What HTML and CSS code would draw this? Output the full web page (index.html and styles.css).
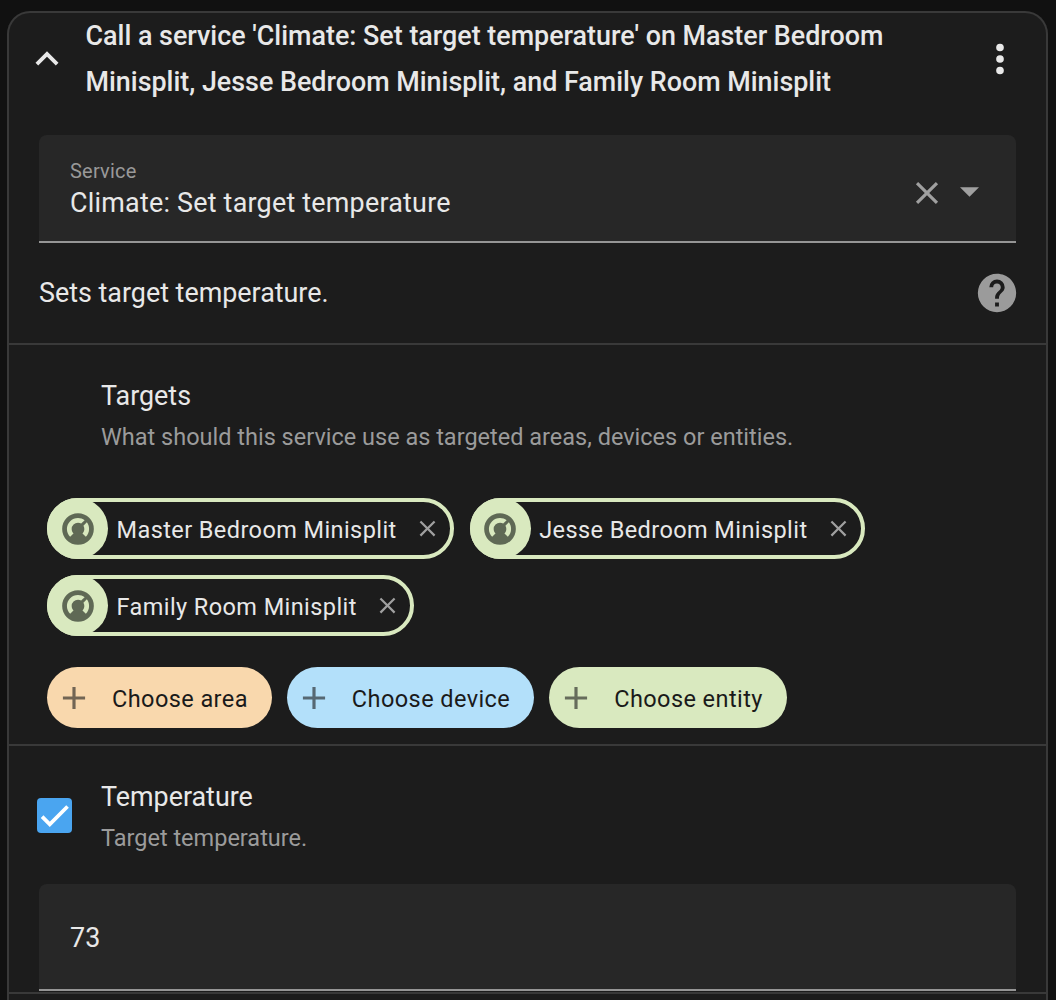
FILE: index.html
```html
<!DOCTYPE html>
<html lang="en">
<head>
    <meta charset="UTF-8">
    <meta name="viewport" content="width=device-width, initial-scale=1.0">
    <title>Edit Action</title>
    <link rel="stylesheet" href="styles.css">
</head>
<body>
    <svg class="defs" width="0" height="0">
        <symbol id="thermostat" viewBox="0 0 24 24"><path d="M16.95,16.95L14.83,14.83C15.55,14.1 16,13.1 16,12C16,11.26 15.79,10.57 15.43,10L17.6,7.81C18.5,9 19,10.43 19,12C19,13.93 18.22,15.68 16.95,16.95M12,5C13.57,5 15,5.5 16.19,6.4L14,8.56C13.43,8.21 12.74,8 12,8A4,4 0 0,0 8,12C8,13.1 8.45,14.1 9.17,14.83L7.05,16.95C5.78,15.68 5,13.93 5,12A7,7 0 0,1 12,5M12,2A10,10 0 0,0 2,12A10,10 0 0,0 12,22A10,10 0 0,0 22,12A10,10 0 0,0 12,2Z"/></symbol>
        <symbol id="close" viewBox="0 0 24 24"><path d="M19,6.41L17.59,5L12,10.59L6.41,5L5,6.41L10.59,12L5,17.59L6.41,19L12,13.41L17.59,19L19,17.59L13.41,12L19,6.41Z"/></symbol>
        <symbol id="plus" viewBox="0 0 24 24"><path d="M19,13H13V19H11V13H5V11H11V5H13V11H19V13Z"/></symbol>
    </svg>
    <div class="card">
        <div class="header">
            <svg class="icon" viewBox="0 0 24 24"><path d="M7.41,15.41L12,10.83L16.59,15.41L18,14L12,8L6,14L7.41,15.41Z"/></svg>
            <h3>Call a service 'Climate: Set target temperature' on Master Bedroom Minisplit, Jesse Bedroom Minisplit, and Family Room Minisplit</h3>
            <svg class="icon" viewBox="0 0 24 24"><path d="M12,16A2,2 0 0,1 14,18A2,2 0 0,1 12,20A2,2 0 0,1 10,18A2,2 0 0,1 12,16M12,10A2,2 0 0,1 14,12A2,2 0 0,1 12,14A2,2 0 0,1 10,12A2,2 0 0,1 12,10M12,4A2,2 0 0,1 14,6A2,2 0 0,1 12,8A2,2 0 0,1 10,6A2,2 0 0,1 12,4Z"/></svg>
        </div>
        <div class="field service">
            <div class="field-text">
                <span class="field-label">Service</span>
                <span class="field-value">Climate: Set target temperature</span>
            </div>
            <svg class="clear"><use href="#close"/></svg>
            <svg class="caret" viewBox="0 0 18 9"><path d="M0,0H18L9,9Z"/></svg>
        </div>
        <div class="description">
            <p>Sets target temperature.</p>
            <svg class="icon help" viewBox="0 0 24 24"><path d="M15.07,11.25L14.17,12.17C13.45,12.89 13,13.5 13,15H11V14.5C11,13.39 11.45,12.39 12.17,11.67L13.41,10.41C13.78,10.05 14,9.55 14,9C14,7.89 13.1,7 12,7A2,2 0 0,0 10,9H8A4,4 0 0,1 12,5A4,4 0 0,1 16,9C16,9.88 15.64,10.67 15.07,11.25M13,19H11V17H13M12,2A10,10 0 0,0 2,12A10,10 0 0,0 12,22A10,10 0 0,0 22,12C22,6.47 17.5,2 12,2Z"/></svg>
        </div>
        <div class="row targets">
            <div class="row-heading">
                <div class="row-title">Targets</div>
                <div class="row-desc">What should this service use as targeted areas, devices or entities.</div>
            </div>
            <div class="chips">
                <div class="chip">
                    <span class="chip-icon"><svg><use href="#thermostat"/></svg></span>
                    <span class="chip-text">Master Bedroom Minisplit</span>
                    <svg class="remove"><use href="#close"/></svg>
                </div>
                <div class="chip">
                    <span class="chip-icon"><svg><use href="#thermostat"/></svg></span>
                    <span class="chip-text">Jesse Bedroom Minisplit</span>
                    <svg class="remove"><use href="#close"/></svg>
                </div>
                <div class="chip">
                    <span class="chip-icon"><svg><use href="#thermostat"/></svg></span>
                    <span class="chip-text">Family Room Minisplit</span>
                    <svg class="remove"><use href="#close"/></svg>
                </div>
            </div>
            <div class="chips add">
                <div class="choose area"><svg><use href="#plus"/></svg><span>Choose area</span></div>
                <div class="choose device"><svg><use href="#plus"/></svg><span>Choose device</span></div>
                <div class="choose entity"><svg><use href="#plus"/></svg><span>Choose entity</span></div>
            </div>
        </div>
        <div class="row temperature">
            <div class="row-top">
                <span class="checkbox"><svg viewBox="0 0 24 24"><path d="M1.73,12.91 8.1,19.28 22.79,4.59"/></svg></span>
                <div class="row-heading">
                    <div class="row-title">Temperature</div>
                    <div class="row-desc">Target temperature.</div>
                </div>
            </div>
            <div class="field"><span class="field-value">73</span></div>
        </div>
        <div class="row"></div>
    </div>
</body>
</html>
```
FILE: styles.css
```css
* {
    box-sizing: border-box;
}
body {
    margin: 0;
    padding: 11px 8px 0 7px;
    height: 1000px;
    overflow: hidden;
    background-color: #111;
    color: #e8e8e8;
    font-family: Roboto, sans-serif;
    font-size: 26.88px;
}
h3, p {
    margin: 0;
}
svg {
    fill: currentColor;
    flex: none;
    display: block;
}
.defs {
    position: absolute;
}
.card {
    height: 989px;
    border: 2px solid #393939;
    border-bottom: none;
    border-radius: 23px 23px 0 0;
    background-color: #1c1c1c;
}
.header {
    display: flex;
    align-items: center;
    height: 90px;
    padding: 1px 23px 0 15px;
}
.header h3 {
    flex: 1;
    margin: 0 55px 0 15.5px;
    font-size: 26.88px;
    font-weight: 500;
    line-height: 46px;
}
.icon {
    width: 46px;
    height: 46px;
}
.field {
    display: flex;
    align-items: center;
    height: 107px;
    margin: 0 30px;
    padding: 3px 31px 0;
    border-bottom: 2px solid #959595;
    border-radius: 8px 8px 0 0;
    background-color: #272727;
}
.field-value {
    letter-spacing: 0.23px;
}
.service {
    height: 108px;
    margin-top: 32px;
    padding-top: 1px;
}
.field-text {
    flex: 1;
    display: flex;
    flex-direction: column;
}
.field-text .field-value {
    line-height: 36px;
}
.field-label {
    color: #999;
    font-size: 20px;
    line-height: 28px;
    letter-spacing: 0.2px;
}
.clear {
    width: 38px;
    height: 38px;
    margin: 8px 14px 0 0;
    color: #a0a0a0;
}
.caret {
    width: 19px;
    height: 10px;
    margin: 6px 6px 0 0;
    color: #a0a0a0;
}
.description {
    display: flex;
    justify-content: space-between;
    align-items: center;
    height: 100px;
    padding: 0 26.5px 0 30px;
}
.description p {
    padding-bottom: 1px;
}
.help {
    color: #9b9b9b;
}
.row {
    border-top: 2px solid #393939;
}
.row-heading {
    margin-left: 92px;
}
.row-title {
    line-height: 42px;
}
.row-desc {
    color: #9b9b9b;
    font-size: 23.5px;
    line-height: 40px;
}
.targets {
    height: 401px;
    padding-top: 30px;
}
.chips {
    display: flex;
    flex-wrap: wrap;
    gap: 16px;
    margin: 41px 38px 0;
    font-size: 23.5px;
    letter-spacing: 0.42px;
}
.chip {
    display: flex;
    align-items: center;
    height: 61px;
    padding-right: 9px;
    border: 4px solid #d9e9bf;
    border-radius: 31px;
}
.chip-text, .choose span {
    padding-top: 2px;
}
.chip-icon {
    display: flex;
    align-items: center;
    justify-content: center;
    width: 61px;
    height: 61px;
    margin: -4px 8.5px -4px -4px;
    border-radius: 50%;
    background-color: #d9e9bf;
    color: #5f6955;
}
.chip-icon svg {
    width: 38px;
    height: 38px;
}
.remove {
    width: 27px;
    height: 27px;
    margin-left: 17px;
    color: #a0a0a0;
}
.add {
    gap: 15px;
    margin-top: 31px;
}
.choose {
    display: flex;
    align-items: center;
    height: 61px;
    padding: 0 24px 0 8px;
    border-radius: 31px;
    color: #1a1a1a;
}
.choose svg {
    width: 38px;
    height: 38px;
    margin-right: 19px;
    opacity: 0.6;
}
.area {
    background-color: #f9d8ad;
}
.device {
    background-color: #b3e0fa;
}
.entity {
    background-color: #d9e9bf;
}
.temperature {
    height: 248px;
    padding-top: 30px;
}
.row-top {
    display: flex;
    align-items: center;
    height: 82px;
    margin-bottom: 26px;
    padding-left: 28px;
}
.row-top .row-heading {
    margin-left: 29px;
}
.checkbox {
    width: 35px;
    height: 35px;
    margin-bottom: 4px;
    padding: 3px;
    border-radius: 4px;
    background-color: #4aa5f0;
}
.checkbox svg {
    width: 29px;
    height: 29px;
    fill: none;
    stroke: #fff;
    stroke-width: 3.1;
}
```
